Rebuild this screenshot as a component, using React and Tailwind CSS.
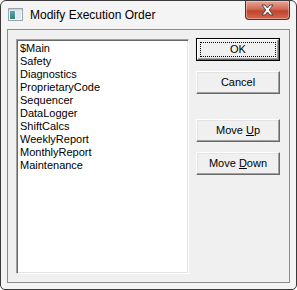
const items = [
  '$Main',
  'Safety',
  'Diagnostics',
  'ProprietaryCode',
  'Sequencer',
  'DataLogger',
  'ShiftCalcs',
  'WeeklyReport',
  'MonthlyReport',
  'Maintenance',
];

function Btn({ children, isDefault, className = '' }) {
  if (isDefault) {
    return (
      <div className={`w-[84px] h-[23px] border border-black ${className}`}>
        <div className="h-full border border-t-white border-l-white border-b-[#696969] border-r-[#696969] bg-[#f0f0f0] shadow-[inset_-1px_-1px_0_#a0a0a0] p-[2px]">
          <div className="h-full border border-dotted border-black flex items-center justify-center text-[11px] text-black leading-none">
            {children}
          </div>
        </div>
      </div>
    );
  }
  return (
    <div className={`w-[84px] h-[23px] border border-t-white border-l-white border-b-[#696969] border-r-[#696969] bg-[#f0f0f0] shadow-[inset_-1px_-1px_0_#a0a0a0,inset_1px_1px_0_#e3e3e3] flex items-center justify-center text-[11px] text-black leading-none ${className}`}>
      {children}
    </div>
  );
}

function TitleIcon() {
  return (
    <svg width="15" height="13" viewBox="0 0 15 13" className="shrink-0">
      <defs>
        <linearGradient id="tg" x1="0" y1="0" x2="0" y2="1">
          <stop offset="0" stopColor="#5aa0c8" />
          <stop offset="1" stopColor="#2e8a6a" />
        </linearGradient>
      </defs>
      <rect x="0.5" y="0.5" width="14" height="12" fill="#f4f6f8" stroke="#9aa4ae" />
      <rect x="2" y="3" width="5" height="8" fill="url(#tg)" />
      <rect x="8" y="3" width="5" height="8" fill="#dfe8ee" />
      <rect x="1" y="1" width="13" height="1.5" fill="#c8d2da" />
    </svg>
  );
}

function CloseButton() {
  return (
    <div className="w-[45px] h-[19px] mr-[6px] self-start rounded-b-[4px] border border-t-0 border-[#5e2a22] bg-[linear-gradient(#e9a596_0%,#d06a55_45%,#c0442c_55%,#d5674f_100%)] shadow-[inset_0_0_0_1px_rgba(255,255,255,0.35)] flex items-center justify-center">
      <svg width="15" height="12" viewBox="0 0 15 12">
        <path d="M2 1 L5 1 L7.5 4 L10 1 L13 1 L9.2 6 L13 11 L10 11 L7.5 8 L5 11 L2 11 L5.8 6 Z" fill="#ffffff" stroke="#4a4a4a" strokeWidth="1" strokeLinejoin="round" />
      </svg>
    </div>
  );
}

export default function App() {
  return (
    <div className="w-[297px] h-[290px] bg-white" style={{ fontFamily: '"Liberation Sans", Arial, sans-serif' }}>
      <div className="w-[297px] h-[290px] flex flex-col border border-[#3a3a3a] rounded-t-[6px] rounded-b-[5px] bg-[#f4f4f4] overflow-hidden">
        <div className="h-[28px] flex items-start shrink-0">
          <div className="flex items-center gap-[7px] pl-[7px] pt-[7px]">
            <TitleIcon />
            <span className="text-[12px] text-black leading-none">Modify Execution Order</span>
          </div>
          <div className="flex-1" />
          <CloseButton />
        </div>
        <div className="flex-1 px-[6px] pb-[6px] flex">
          <div className="flex-1 border border-[#8c8c8c] bg-[#f0f0f0] flex pl-[8px] pt-[9px] pr-[9px]">
            <div className="w-[173px] h-[235px] border border-t-[#a0a0a0] border-l-[#a0a0a0] border-b-white border-r-white shadow-[inset_1px_1px_0_#696969,inset_-1px_-1px_0_#e3e3e3] bg-white pl-[3px] pt-[2px]">
              {items.map((it) => (
                <div key={it} className="h-[13px] text-[11px] leading-[13px] text-black whitespace-nowrap">
                  {it}
                </div>
              ))}
            </div>
            <div className="ml-[7px] -mt-[1px] flex flex-col">
              <Btn isDefault>OK</Btn>
              <Btn className="mt-[10px]">Cancel</Btn>
              <Btn className="mt-[25px]">
                <span>Move <span className="underline">U</span>p</span>
              </Btn>
              <Btn className="mt-[10px]">
                <span>Move <span className="underline">D</span>own</span>
              </Btn>
            </div>
          </div>
        </div>
      </div>
    </div>
  );
}
